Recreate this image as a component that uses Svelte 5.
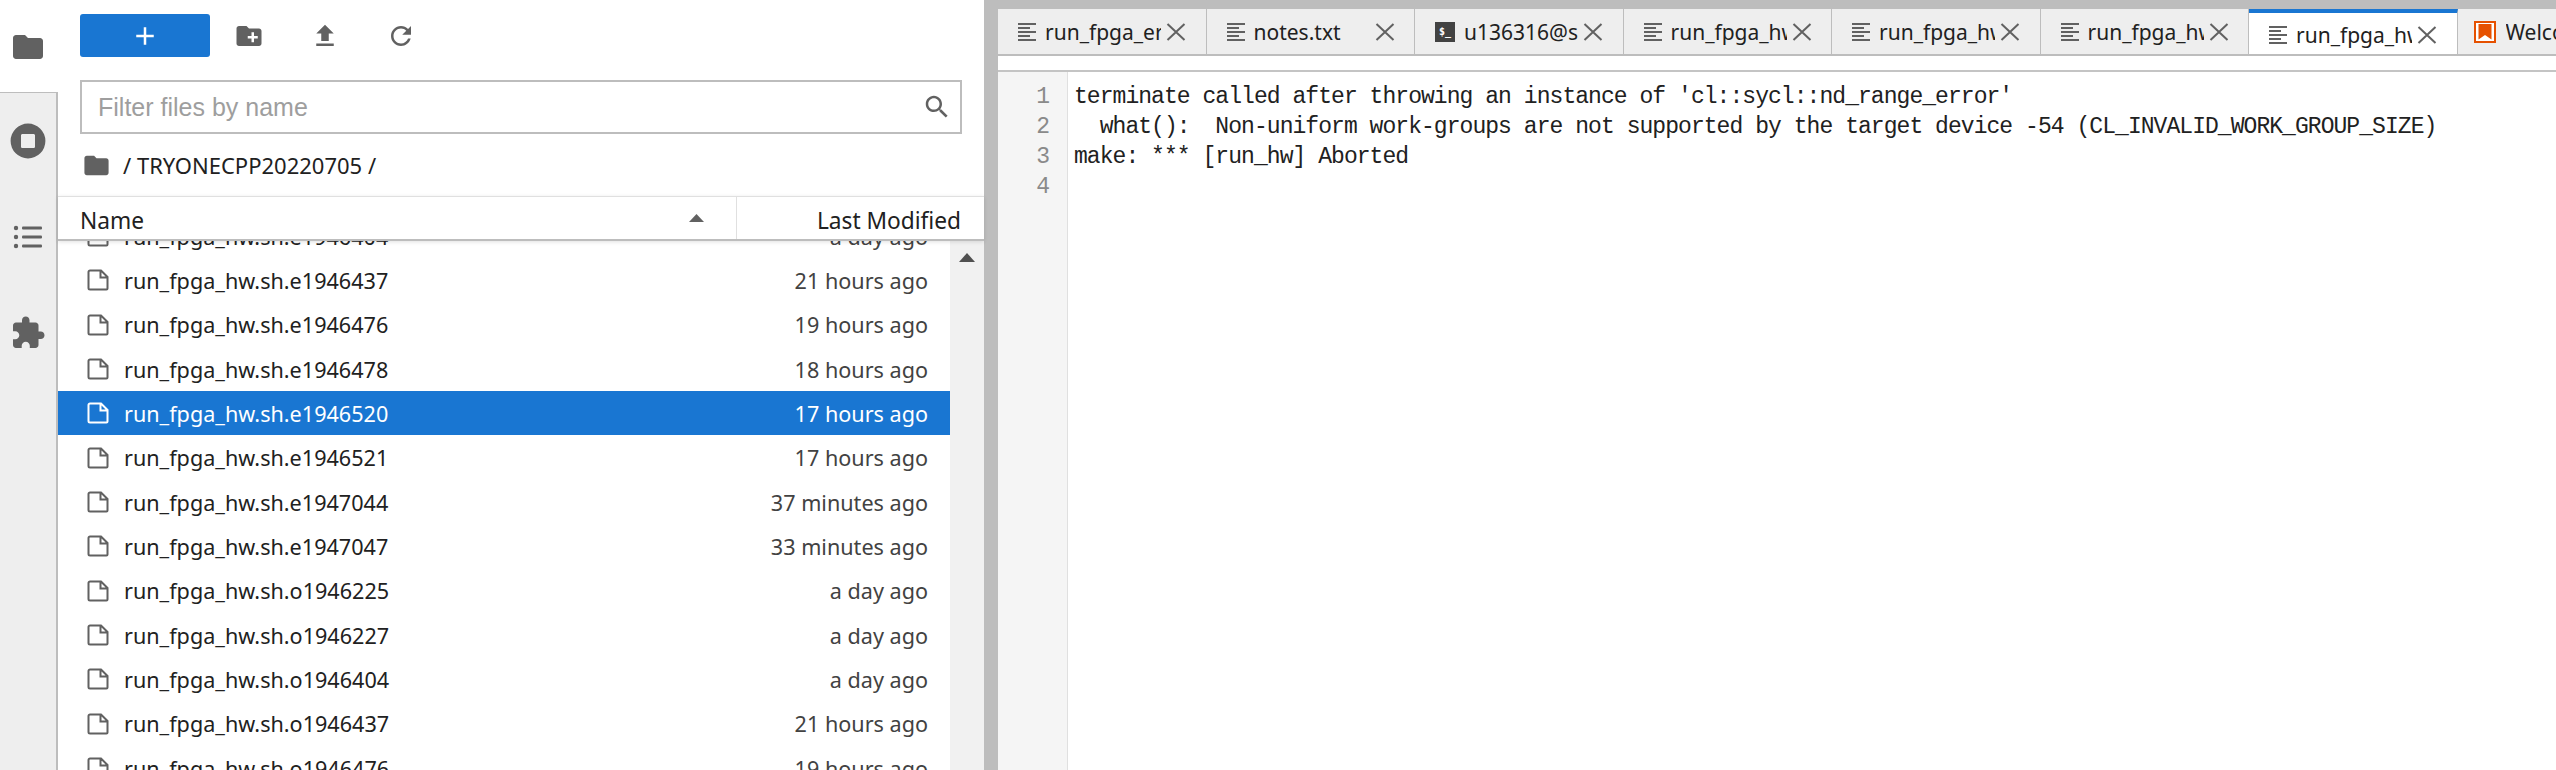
<script>
  // file browser rows, top one is half scrolled under the header
  const files = [
    ['run_fpga_hw.sh.e1946404', 'a day ago'],
    ['run_fpga_hw.sh.e1946437', '21 hours ago'],
    ['run_fpga_hw.sh.e1946476', '19 hours ago'],
    ['run_fpga_hw.sh.e1946478', '18 hours ago'],
    ['run_fpga_hw.sh.e1946520', '17 hours ago'],
    ['run_fpga_hw.sh.e1946521', '17 hours ago'],
    ['run_fpga_hw.sh.e1947044', '37 minutes ago'],
    ['run_fpga_hw.sh.e1947047', '33 minutes ago'],
    ['run_fpga_hw.sh.o1946225', 'a day ago'],
    ['run_fpga_hw.sh.o1946227', 'a day ago'],
    ['run_fpga_hw.sh.o1946404', 'a day ago'],
    ['run_fpga_hw.sh.o1946437', '21 hours ago'],
    ['run_fpga_hw.sh.o1946476', '19 hours ago']
  ];
  const selected = 4;

  const tabs = [
    { label: 'run_fpga_er', kind: 'text' },
    { label: 'notes.txt', kind: 'text' },
    { label: 'u136316@s', kind: 'term' },
    { label: 'run_fpga_hw', kind: 'text' },
    { label: 'run_fpga_hw', kind: 'text' },
    { label: 'run_fpga_hw', kind: 'text' },
    { label: 'run_fpga_hw', kind: 'text', active: true }
  ];

  const lines = [
    "terminate called after throwing an instance of 'cl::sycl::nd_range_error'",
    '  what():  Non-uniform work-groups are not supported by the target device -54 (CL_INVALID_WORK_GROUP_SIZE)',
    'make: *** [run_hw] Aborted',
    ''
  ];

  const folder = 'M10 4H4c-1.1 0-2 .9-2 2v12c0 1.1.9 2 2 2h16c1.1 0 2-.9 2-2V8c0-1.1-.9-2-2-2h-8l-2-2z';
</script>

<div class="shell">
  <nav class="rail">
    <div class="rail-tab first">
      <svg width="36" height="36" viewBox="0 0 24 24"><path d={folder} /></svg>
    </div>
    <div class="rail-rest">
      <div class="rail-tab">
        <svg width="36" height="36" viewBox="0 0 18 18"><path fill-rule="evenodd" d="M9 .3a8.7 8.7 0 1 0 0 17.4A8.7 8.7 0 0 0 9 .3zM6.3 5.5h5.4c.5 0 .8.3.8.8v5.4c0 .5-.3.8-.8.8H6.3c-.5 0-.8-.3-.8-.8V6.300c0-.5.3-.8.8-.8z" /></svg>
      </div>
      <div class="rail-tab">
        <svg width="30" height="24" viewBox="0 0 30 24">
          <circle cx="3" cy="3" r="2.200" /><circle cx="3" cy="12" r="2.200" /><circle cx="3" cy="21" r="2.200" />
          <rect x="9" y="1.500" width="20" height="3" rx="1" /><rect x="9" y="10.500" width="20" height="3" rx="1" /><rect x="9" y="19.500" width="20" height="3" rx="1" />
        </svg>
      </div>
      <div class="rail-tab">
        <svg width="36" height="36" viewBox="0 0 24 24"><path d="M20.500 11H19V7c0-1.100-.9-2-2-2h-4V3.500C13 2.120 11.880 1 10.500 1S8 2.120 8 3.500V5H4c-1.100 0-1.990.9-1.990 2v3.800H3.500c1.490 0 2.700 1.210 2.700 2.700s-1.210 2.700-2.700 2.700H2V20c0 1.100.9 2 2 2h3.800v-1.500c0-1.490 1.210-2.700 2.700-2.700 1.490 0 2.700 1.210 2.700 2.700V22H17c1.100 0 2-.9 2-2v-4h1.500c1.380 0 2.500-1.120 2.500-2.500S21.880 11 20.500 11z" /></svg>
      </div>
    </div>
  </nav>

  <section class="browser">
    <div class="toolbar">
      <button class="launch" aria-label="New launcher">
        <svg width="30" height="30" viewBox="0 0 24 24"><path d="M19 13h-6v6h-2v-6H5v-2h6V5h2v6h6v2z" /></svg>
      </button>
      <span class="tool first-tool"><svg width="30" height="30" viewBox="0 0 24 24"><path d="M20 6h-8l-2-2H4c-1.110 0-1.990.89-1.990 2L2 18c0 1.110.89 2 2 2h16c1.110 0 2-.89 2-2V8c0-1.110-.89-2-2-2zm-1 8h-3v3h-2v-3h-3v-2h3V9h2v3h3v2z" /></svg></span>
      <span class="tool"><svg width="30" height="30" viewBox="0 0 24 24"><path d="M9 16h6v-6h4l-7-7-7 7h4zm-4 2h14v2H5z" /></svg></span>
      <span class="tool"><svg width="30" height="30" viewBox="0 0 24 24"><path d="M17.650 6.350C16.200 4.900 14.210 4 12 4c-4.420 0-7.990 3.580-7.990 8s3.570 8 7.990 8c3.730 0 6.840-2.550 7.730-6h-2.080c-.82 2.330-3.040 4-5.650 4-3.310 0-6-2.690-6-6s2.690-6 6-6c1.660 0 3.140.69 4.220 1.780L13 11h7V4l-2.350 2.350z" /></svg></span>
    </div>

    <div class="filter">
      <span class="placeholder">Filter files by name</span>
      <svg width="30" height="30" viewBox="0 0 24 24"><path d="M15.500 14h-.79l-.28-.27C15.410 12.590 16 11.110 16 9.500 16 5.910 13.090 3 9.500 3S3 5.910 3 9.500 5.910 16 9.500 16c1.610 0 3.090-.59 4.230-1.570l.27.28v.79l5 4.990L20.490 19l-4.990-5zm-6 0C7.010 14 5 11.990 5 9.500S7.010 5 9.500 5 14 7.010 14 9.500 11.990 14 9.500 14z" /></svg>
    </div>

    <div class="crumbs">
      <svg width="29" height="29" viewBox="0 0 24 24"><path d={folder} /></svg>
      <span>/ TRYONECPP20220705 /</span>
    </div>

    <div class="head">
      <div class="head-name">
        <span>Name</span>
        <svg width="15" height="8" viewBox="0 0 15 8"><path d="M7.500 0 15 8H0z" /></svg>
      </div>
      <div class="head-mod">Last Modified</div>
    </div>

    <div class="list-wrap">
      <ul class="list">
        {#each files as [name, when], i}
          <li class="row" class:sel={i === selected}>
            <svg class="file" width="22" height="22" viewBox="0 0 22 22"><path d="M3 1.500h11l6.500 6.500v11.500a1 1 0 0 1-1 1H3a1.500 1.500 0 0 1-1.500-1.500V3A1.500 1.500 0 0 1 3 1.500zM13.500 2v6.500h6.500" /></svg>
            <span class="fname">{name}</span>
            <span class="when">{when}</span>
          </li>
        {/each}
      </ul>
      <div class="scroll">
        <svg width="16" height="9" viewBox="0 0 16 9"><path d="M8 0l8 9H0z" /></svg>
      </div>
    </div>
  </section>

  <main class="work">
    <div class="tabbar">
      {#each tabs as t}
        <div class="tab" class:active={t.active}>
          {#if t.kind === 'term'}
            <span class="term-ico"><span>$_</span></span>
          {:else}
            <svg class="tab-ico" width="24" height="24" viewBox="0 0 24 24"><path d="M15 15H3v2h12v-2zm0-8H3v2h12V7zM3 13h18v-2H3v2zm0 8h18v-2H3v2zM3 3v2h18V3H3z" /></svg>
          {/if}
          <span class="tab-label" class:term={t.kind === 'term'}>{t.label}</span>
          <svg class="close" width="20" height="20" viewBox="0 0 20 20"><path d="M1.500 2l17 16M18.500 2l-17 16" /></svg>
        </div>
      {/each}
      <div class="tab welcome">
        <svg width="22" height="22" viewBox="0 0 22 22"><rect width="22" height="22" fill="#e65100" /><rect x="2" y="2" width="18" height="18" fill="#fff" /><path d="M4.500 3h13v15.500L11 14l-6.500 4.500z" fill="#e65100" /></svg>
        <span class="tab-label">Welcome</span>
      </div>
    </div>
    <div class="strip"></div>
    <div class="editor">
      <div class="gutter">
        {#each lines as _, i}<div class="num">{i + 1}</div>{/each}
      </div>
      <div class="code">
        {#each lines as l}<div class="line">{l}</div>{/each}
      </div>
    </div>
  </main>
</div>

<style>
  :global(body) {
    margin: 0;
    background: #fff;
    overflow: hidden;
  }

  .shell {
    display: flex;
    width: 2556px;
    height: 770px;
    overflow: hidden;
    font-family: 'Noto Sans', sans-serif;
    color: #212121;
  }

  svg {
    fill: #616161;
    flex: none;
    display: block;
  }

  .rail {
    width: 58px;
    flex: none;
    display: flex;
    flex-direction: column;
  }

  .rail-tab {
    height: 96px;
    display: flex;
    align-items: center;
    justify-content: center;
  }

  .rail-tab.first {
    height: 93px;
    padding-right: 2px;
    box-sizing: border-box;
  }

  .rail-rest {
    flex: 1;
    background: #eee;
    border-top: 1px solid #bdbdbd;
    border-right: 2px solid #bdbdbd;
    margin-top: -1px;
  }

  .browser {
    width: 926px;
    flex: none;
    display: flex;
    flex-direction: column;
    background: #fff;
  }

  .toolbar {
    display: flex;
    align-items: center;
    padding: 14px 0 0 22px;
    height: 43px;
  }

  .launch {
    width: 130px;
    height: 43px;
    border: 0;
    padding: 0;
    border-radius: 3px;
    background: #1976d2;
    display: flex;
    align-items: center;
    justify-content: center;
  }

  .launch svg {
    fill: #fff;
  }

  .tool {
    width: 30px;
    margin-right: 46px;
  }

  .first-tool {
    margin-left: 24px;
  }

  .filter {
    margin: 23px 22px 0;
    height: 54px;
    box-sizing: border-box;
    border: 2px solid #bdbdbd;
    display: flex;
    align-items: center;
    justify-content: space-between;
    padding: 0 8px 0 16px;
  }

  .placeholder {
    font-family: 'Liberation Sans', sans-serif;
    font-size: 25px;
    color: #9e9e9e;
  }

  .crumbs {
    display: flex;
    align-items: center;
    gap: 12px;
    height: 62px;
    padding-left: 24px;
    font-size: 22px;
    color: #212121;
  }

  .head {
    display: flex;
    height: 45px;
    box-sizing: border-box;
    border-top: 1px solid #e0e0e0;
    border-bottom: 2px solid #bdbdbd;
    box-shadow: 0 1px 4px rgba(0, 0, 0, 0.12);
    font-size: 22.700px;
    position: relative;
    z-index: 1;
    background: #fff;
  }

  .head-name {
    width: 679px;
    flex: none;
    box-sizing: border-box;
    border-right: 1px solid #e0e0e0;
    display: flex;
    align-items: center;
    justify-content: space-between;
    padding: 5px 32px 0 22px;
  }

  .head-name svg {
    margin-top: -5px;
  }

  .head-mod {
    flex: 1;
    display: flex;
    align-items: center;
    justify-content: flex-end;
    padding: 5px 23px 0 0;
  }

  .list-wrap {
    flex: 1;
    min-height: 0;
    display: flex;
    overflow: hidden;
  }

  .list {
    flex: 1;
    list-style: none;
    margin: -27.500px 0 0;
    padding: 0;
  }

  .row {
    height: 44.330px;
    box-sizing: border-box;
    display: flex;
    align-items: center;
    padding: 1px 22px 0 29px;
    font-size: 21.600px;
  }

  .row .file {
    fill: none;
    stroke: #616161;
    stroke-width: 2;
  }

  .fname {
    margin-left: 15px;
    flex: 1;
  }

  .when {
    color: #424242;
  }

  .row.sel {
    background: #1976d2;
    color: #fff;
  }

  .row.sel .when {
    color: #fff;
  }

  .row.sel .file {
    stroke: #fff;
  }

  .scroll {
    width: 34px;
    flex: none;
    background: #f1f1f1;
    display: flex;
    justify-content: center;
    padding-top: 12px;
    box-sizing: border-box;
  }

  .scroll svg {
    fill: #505050;
  }

  .work {
    flex: 1;
    min-width: 0;
    background: #fff;
    border-left: 14px solid #bdbdbd;
    display: flex;
    flex-direction: column;
  }

  .tabbar {
    display: flex;
    background: #eee;
    border-top: 9px solid #bdbdbd;
    height: 45px;
    border-bottom: 2px solid #bdbdbd;
    box-sizing: content-box;
    overflow: hidden;
  }

  .tab {
    width: 208.500px;
    flex: none;
    box-sizing: border-box;
    display: flex;
    align-items: center;
    padding: 0 10px 0 17px;
    border-right: 1px solid #bdbdbd;
    font-size: 21px;
  }

  .tab.active {
    background: #fff;
    border-top: 4px solid #1976d2;
    margin-bottom: -2px;
  }

  .tab.welcome {
    border: 0;
    padding-left: 16px;
    gap: 10px;
    width: auto;
  }

  .tab-ico {
    margin-right: 6px;
  }

  .term-ico {
    width: 20px;
    height: 20px;
    background: #424242;
    margin: 0 9px 0 3px;
    flex: none;
    color: #fff;
    font: 700 10px/20px 'DejaVu Sans Mono', monospace;
    text-align: center;
  }

  .tab-label {
    flex: none;
    width: 116px;
    margin-right: 2px;
    overflow: hidden;
    white-space: nowrap;
  }

  .tab-label.term {
    width: 114px;
    margin-right: 2px;
  }

  .tab.welcome .tab-label {
    width: auto;
  }

  .close {
    fill: none;
    stroke: #616161;
    stroke-width: 2;
    margin-left: 3px;
  }

  .strip {
    height: 14px;
    border-bottom: 2px solid #c4c4c4;
  }

  .editor {
    flex: 1;
    display: flex;
    min-height: 0;
  }

  .gutter {
    width: 70px;
    flex: none;
    box-sizing: border-box;
    background: #f5f5f5;
    border-right: 1px solid #e0e0e0;
    padding: 10px 17px 0 0;
    font: 23px/30px 'Liberation Mono', monospace;
    color: #8a8a8a;
    text-align: right;
  }

  .code {
    padding: 10px 0 0 6px;
    font: 23px/30px 'Liberation Mono', monospace;
    letter-spacing: -0.950px;
    color: #212121;
  }

  .line {
    white-space: pre;
    height: 30px;
  }
</style>
